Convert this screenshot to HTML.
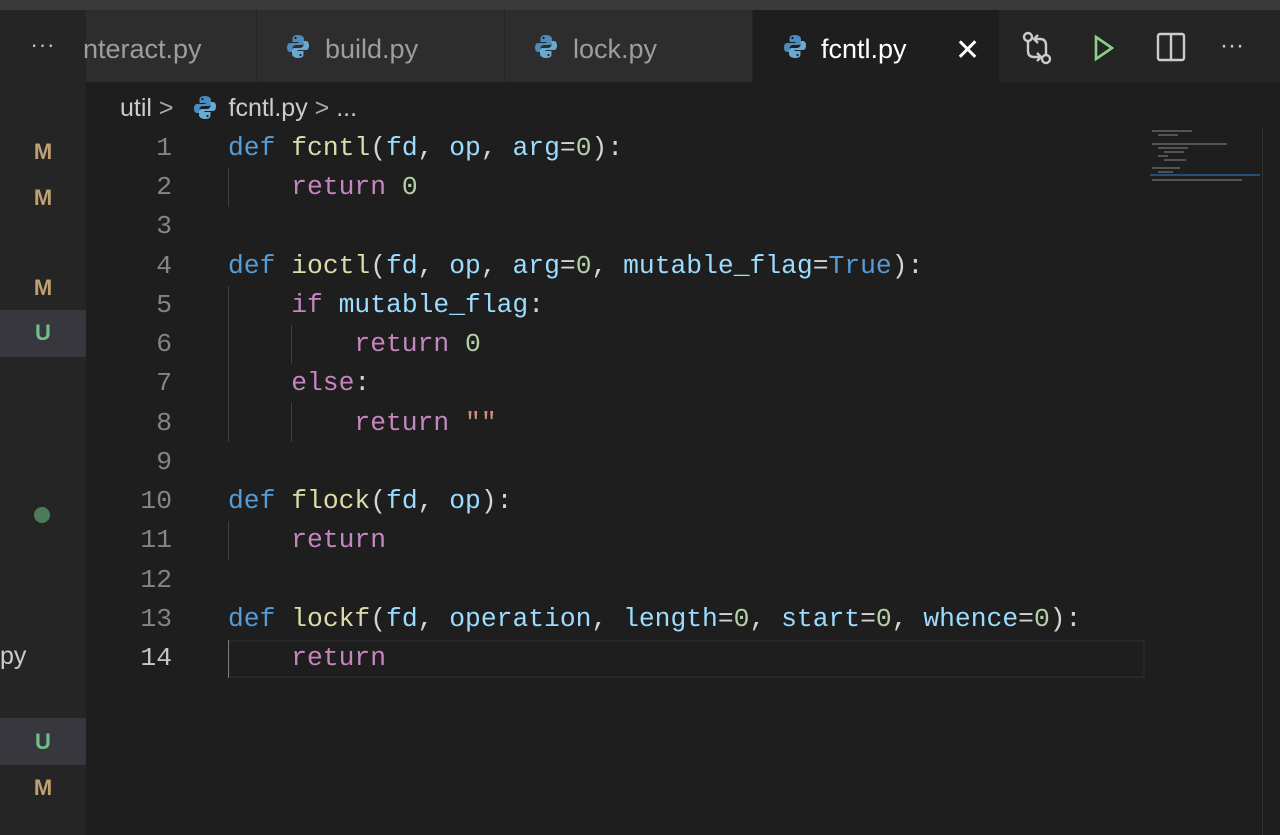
<!DOCTYPE html>
<html><head><meta charset="utf-8"><style>
*{margin:0;padding:0;box-sizing:border-box}
body{width:1280px;height:835px;overflow:hidden;background:#1e1e1e;font-family:"Liberation Sans",sans-serif;position:relative}
.top{position:absolute;left:0;top:0;width:1280px;height:10px;background:#3a3a3a}
.tabs{position:absolute;left:0;top:10px;width:1280px;height:72px;background:#252526}
.tab{position:absolute;top:0;height:72px;background:#2d2d2d;border-right:1px solid #252526;color:#9d9d9d;font-size:27px;line-height:78px}
.tab.act{background:#1e1e1e;color:#fff}
.side{position:absolute;left:0;top:82px;width:86px;height:753px;background:#252526}
.hl{position:absolute;left:0;width:86px;height:47px;background:#37373d}
.st{position:absolute;width:86px;text-align:center;font-weight:bold;font-size:22px}
.crumb{position:absolute;left:120px;top:92px;color:#cccccc;font-size:25px;line-height:32px}
.code{position:absolute;left:0;top:129px;font-family:"Liberation Mono",monospace;font-size:26.33px;line-height:39.23px;white-space:pre;color:#d4d4d4}
.ln{position:absolute;left:100px;width:72px;text-align:right;color:#858585}
.tx{position:absolute;left:228px}
.k{color:#569cd6}.f{color:#dcdcaa}.p{color:#9cdcfe}.n{color:#b5cea8}.r{color:#c586c0}.s{color:#ce9178}
.guide{position:absolute;width:1px;background:#404040}
.py{position:absolute}
</style></head><body>
<svg width="0" height="0" style="position:absolute"><defs><g id="pyi"><path d="M11 1C6 1 5.5 3 5.5 5v3h6v1H3C1 9 0 11 0 13.5S1 18 3 18h2.5v-3.5C5.5 12.5 7 11 9 11h5c2 0 3-1 3-3V5c0-2-2-4-6-4z" fill="#4b8bbe"/><path d="M11 24c5 0 5.5-2 5.5-4v-3h-6v-1H19c2 0 3-2 3-4.5S21 7 19 7h-2.5v3.5C16.5 12.5 15 14 13 14H8c-2 0-3 1-3 3v3c0 2 2 4 6 4z" fill="#6aa9d4"/><circle cx="8.5" cy="4" r="1.1" fill="#1e1e1e"/><circle cx="13.5" cy="21" r="1.1" fill="#1e1e1e"/></g></defs></svg>
<div class="top"></div>
<div class="tabs">
 <div style="position:absolute;left:0;top:0;width:86px;height:72px;background:#252526;color:#ccc;font-size:22px;text-align:center;line-height:70px;letter-spacing:1px">···</div>
 <div class="tab" style="left:86px;width:171px"><span style="margin-left:-3px">nteract.py</span></div>
 <div class="tab" style="left:257px;width:248px"><svg class="py" style="left:30px;top:24px" width="22" height="25" viewBox="0 0 22 25"><use href="#pyi"/></svg><span style="margin-left:68px">build.py</span></div>
 <div class="tab" style="left:505px;width:248px"><svg class="py" style="left:30px;top:24px" width="22" height="25" viewBox="0 0 22 25"><use href="#pyi"/></svg><span style="margin-left:68px">lock.py</span></div>
 <div class="tab act" style="left:753px;width:247px"><svg class="py" style="left:31px;top:24px" width="22" height="25" viewBox="0 0 22 25"><use href="#pyi"/></svg><span style="margin-left:68px">fcntl.py</span><span style="position:absolute;left:202px;top:2px;font-size:30px">✕</span></div>
 <svg style="position:absolute;left:1020px;top:20px" width="36" height="36" viewBox="0 0 36 36" fill="none" stroke="#ccc" stroke-width="2.4"><circle cx="8" cy="7" r="4"/><circle cx="26" cy="29" r="4"/><path d="M8 11v10q0 6 6 6h6M17 23l4 4-4 4M26 25V15q0-6-6-6h-6M18 5l-4 4 4 4"/></svg>
 <svg style="position:absolute;left:1092px;top:24px" width="24" height="28" viewBox="0 0 24 28"><path d="M4 3L20 14 4 25Z" fill="none" stroke="#89d185" stroke-width="2.6"/></svg>
 <svg style="position:absolute;left:1156px;top:22px" width="30" height="30" viewBox="0 0 30 30" fill="none" stroke="#ccc" stroke-width="2.4"><rect x="2" y="2" width="26" height="26" rx="2"/><path d="M15 2v26"/></svg>
 <div style="position:absolute;left:1220px;top:0;color:#ccc;font-size:24px;line-height:72px">···</div>
</div>
<div class="side">
 <div class="hl" style="top:228px"></div>
 <div class="hl" style="top:636px"></div>
 <div class="st" style="top:57px;color:#c09f73">M</div>
 <div class="st" style="top:103px;color:#c09f73">M</div>
 <div class="st" style="top:193px;color:#c09f73">M</div>
 <div class="st" style="top:238px;color:#6fbf8a">U</div>
 <div style="position:absolute;left:34px;top:425px;width:16px;height:16px;border-radius:50%;background:#4e7c5a"></div>
 <div style="position:absolute;left:0;top:560px;color:#ccc;font-size:25px">py</div>
 <div class="st" style="top:647px;color:#6fbf8a">U</div>
 <div class="st" style="top:693px;color:#c09f73">M</div>
</div>
<div class="crumb">util <span style="color:#aaa">&gt;</span><svg style="vertical-align:-4px;margin:0 13px 0 20px" width="22" height="25" viewBox="0 0 22 25"><use href="#pyi"/></svg>fcntl.py <span style="color:#aaa">&gt;</span> ...</div>
<div style="position:absolute;left:228px;top:640px;width:917px;height:38px;border:2px solid #282828"></div>
<div class="guide" style="left:228px;top:168px;height:39px"></div>
<div class="guide" style="left:228px;top:286px;height:156px"></div>
<div class="guide" style="left:291px;top:325px;height:39px"></div>
<div class="guide" style="left:291px;top:403px;height:39px"></div>
<div class="guide" style="left:228px;top:521px;height:39px"></div>
<div class="guide" style="left:228px;top:640px;height:38px;background:#777"></div>
<div class="code">
<div class="ln" style="top:0">1</div><div class="ln" style="top:39.23px">2</div><div class="ln" style="top:78.46px">3</div><div class="ln" style="top:117.69px">4</div><div class="ln" style="top:156.92px">5</div><div class="ln" style="top:196.15px">6</div><div class="ln" style="top:235.38px">7</div><div class="ln" style="top:274.61px">8</div><div class="ln" style="top:313.84px">9</div><div class="ln" style="top:353.07px">10</div><div class="ln" style="top:392.3px">11</div><div class="ln" style="top:431.53px">12</div><div class="ln" style="top:470.76px">13</div><div class="ln" style="top:510px;color:#c6c6c6">14</div>
<div class="tx" style="top:0"><span class="k">def</span> <span class="f">fcntl</span>(<span class="p">fd</span>, <span class="p">op</span>, <span class="p">arg</span>=<span class="n">0</span>):
    <span class="r">return</span> <span class="n">0</span>

<span class="k">def</span> <span class="f">ioctl</span>(<span class="p">fd</span>, <span class="p">op</span>, <span class="p">arg</span>=<span class="n">0</span>, <span class="p">mutable_flag</span>=<span class="k">True</span>):
    <span class="r">if</span> <span class="p">mutable_flag</span>:
        <span class="r">return</span> <span class="n">0</span>
    <span class="r">else</span>:
        <span class="r">return</span> <span class="s">""</span>

<span class="k">def</span> <span class="f">flock</span>(<span class="p">fd</span>, <span class="p">op</span>):
    <span class="r">return</span>

<span class="k">def</span> <span class="f">lockf</span>(<span class="p">fd</span>, <span class="p">operation</span>, <span class="p">length</span>=<span class="n">0</span>, <span class="p">start</span>=<span class="n">0</span>, <span class="p">whence</span>=<span class="n">0</span>):
    <span class="r">return</span></div>
</div>
<div style="position:absolute;left:1152px;top:128px;width:100px;height:50px;opacity:.5">
 <div style="height:2px;width:40px;background:#888;margin-top:2px"></div>
 <div style="height:2px;width:20px;background:#888;margin:2px 0 0 6px"></div>
 <div style="height:2px;width:75px;background:#888;margin-top:7px"></div>
 <div style="height:2px;width:30px;background:#888;margin:2px 0 0 6px"></div>
 <div style="height:2px;width:20px;background:#888;margin:2px 0 0 12px"></div>
 <div style="height:2px;width:10px;background:#888;margin:2px 0 0 6px"></div>
 <div style="height:2px;width:22px;background:#888;margin:2px 0 0 12px"></div>
 <div style="height:2px;width:28px;background:#888;margin-top:6px"></div>
 <div style="height:2px;width:15px;background:#888;margin:2px 0 0 6px"></div>
 <div style="height:2px;width:90px;background:#888;margin-top:6px"></div>
</div>
<div style="position:absolute;left:1150px;top:174px;width:110px;height:2px;background:#264f78"></div>
<div style="position:absolute;left:1262px;top:128px;width:1px;height:707px;background:#333"></div>
</body></html>
